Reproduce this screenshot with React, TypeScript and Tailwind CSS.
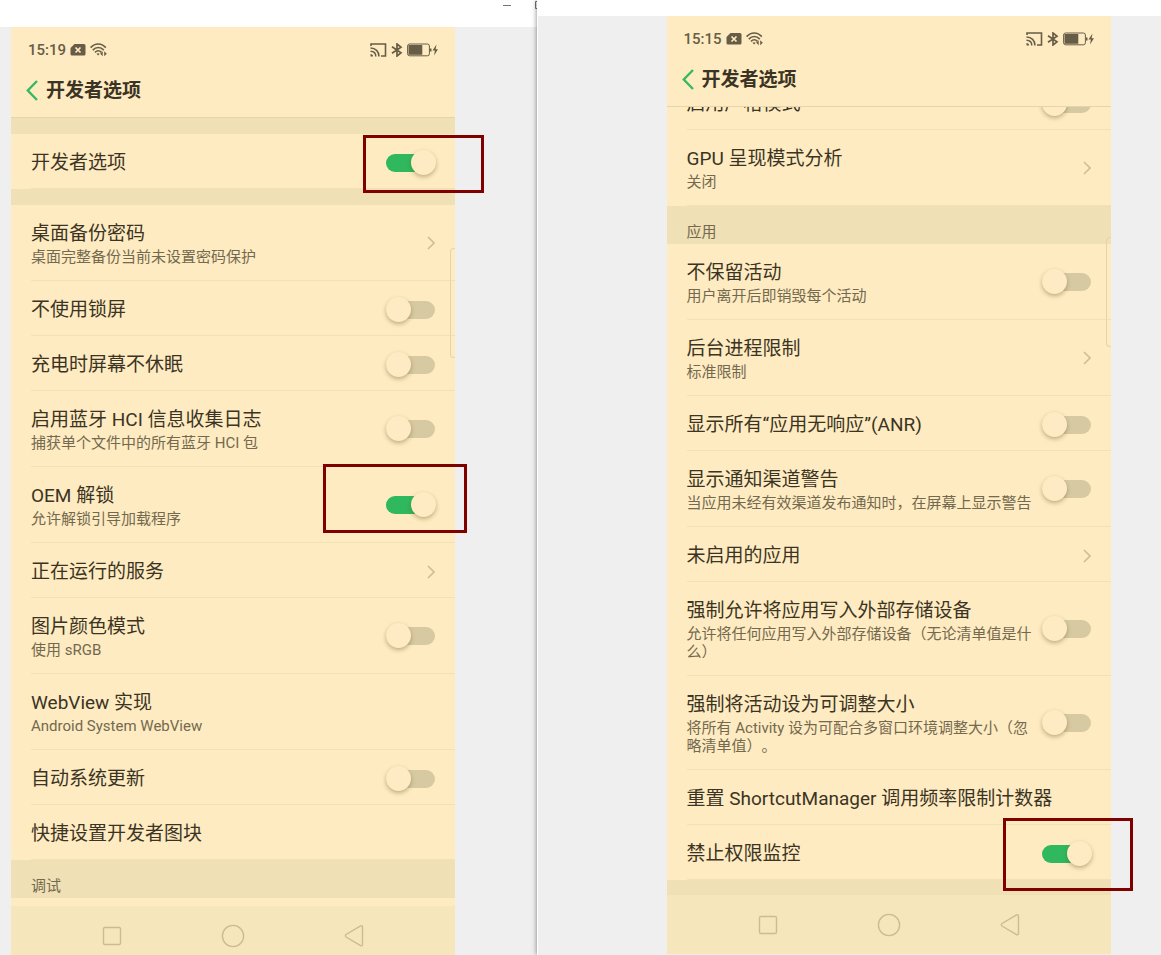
import { useState } from "react";
import type { ReactNode } from "react";

type RowType = {
  title: string;
  sub?: string;
  kind?: "switch" | "link";
  on?: boolean;
  // tailwind classes for the red frame around the switch
  mark?: string;
};

const systemRows: RowType[] = [
  {
    title: "桌面备份密码",
    sub: "桌面完整备份当前未设置密码保护",
    kind: "link",
  },
  { title: "不使用锁屏", kind: "switch" },
  { title: "充电时屏幕不休眠", kind: "switch" },
  {
    title: "启用蓝牙 HCI 信息收集日志",
    sub: "捕获单个文件中的所有蓝牙 HCI 包",
    kind: "switch",
  },
  {
    title: "OEM 解锁",
    sub: "允许解锁引导加载程序",
    kind: "switch",
    on: true,
    mark: "-top-[3px] -right-3 w-36 h-[69px]",
  },
  { title: "正在运行的服务", kind: "link" },
  { title: "图片颜色模式", sub: "使用 sRGB", kind: "switch" },
  { title: "WebView 实现", sub: "Android System WebView" },
  { title: "自动系统更新", kind: "switch" },
  { title: "快捷设置开发者图块" },
];

const appRows: RowType[] = [
  {
    title: "不保留活动",
    sub: "用户离开后即销毁每个活动",
    kind: "switch",
  },
  { title: "后台进程限制", sub: "标准限制", kind: "link" },
  { title: "显示所有“应用无响应”(ANR)", kind: "switch" },
  {
    title: "显示通知渠道警告",
    sub: "当应用未经有效渠道发布通知时，在屏幕上显示警告",
    kind: "switch",
  },
  { title: "未启用的应用", kind: "link" },
  {
    title: "强制允许将应用写入外部存储设备",
    sub: "允许将任何应用写入外部存储设备（无论清单值是什么）",
    kind: "switch",
  },
  {
    title: "强制将活动设为可调整大小",
    sub: "将所有 Activity 设为可配合多窗口环境调整大小（忽略清单值）。",
    kind: "switch",
  },
  { title: "重置 ShortcutManager 调用频率限制计数器" },
  {
    title: "禁止权限监控",
    kind: "switch",
    on: true,
    mark: "-top-[7px] -right-[22px] w-[130px] h-[73px]",
  },
];

const Row = ({ title, sub, kind, on = false, mark }: RowType) => {
  const [checked, setChecked] = useState(on);

  const text = (
    <span className="flex-1 min-w-0 flex flex-col">
      <span className="text-[19px] leading-7 text-[#3b3424] whitespace-nowrap">
        {title}
      </span>
      {sub && (
        <span className="text-[15px] leading-[18px] text-[#73694f]">{sub}</span>
      )}
    </span>
  );

  return (
    <li className="relative pl-5">
      {kind === "switch" ? (
        <label
          className={`flex items-center gap-2 pr-5 border-b border-[#f2e1b7] cursor-pointer ${
            sub ? "pt-[15px] pb-3.5" : "pt-[15px] pb-[11px]"
          }`}
        >
          {text}
          <input
            type="checkbox"
            role="switch"
            checked={checked}
            onChange={(e) => setChecked(e.target.checked)}
            className="relative shrink-0 appearance-none w-[49px] h-[18px] rounded-full cursor-pointer bg-[#d7c9a2] checked:bg-[#2fb85e] before:content-[''] before:absolute before:-top-1 before:left-0 before:size-[25px] before:rounded-full before:bg-[#feebc3] before:shadow-[0_2px_4px_rgba(100,80,30,0.4)] checked:before:left-[25px]"
          />
        </label>
      ) : (
        <button
          type="button"
          className={`w-full flex items-center gap-2 pr-5 text-left border-b border-[#f2e1b7] cursor-pointer ${
            sub ? "pt-[15px] pb-3.5" : "pt-[15px] pb-[11px]"
          }`}
        >
          {text}
          {kind === "link" && (
            <svg width="8" height="14" viewBox="0 0 8 14" fill="none">
              <path d="M1 1l6 6-6 6" stroke="#cdbe97" strokeWidth="1.6" />
            </svg>
          )}
        </button>
      )}
      {mark && (
        <span
          className={`absolute z-10 border-3 border-[#800000] pointer-events-none ${mark}`}
        />
      )}
    </li>
  );
};

const SectionTitle = ({ children }: { children: ReactNode }) => (
  <h2 className="bg-[#efe0b5] pl-5 pt-4 pb-0.5 text-[15px] leading-5 text-[#73694f]">
    {children}
  </h2>
);

const StatusBar = ({ time }: { time: string }) => (
  <div className="flex items-center h-5 pl-[17px] pr-4 text-[#675d46]">
    <span className="text-[15px] leading-5 font-medium">{time}</span>
    <svg className="ml-1" width="16" height="12" viewBox="0 0 16 12">
      <path
        d="M4.500 0H14a1.500 1.500 0 0 1 1.500 1.500v8.500a1.500 1.500 0 0 1-1.500 1.500H2A1.500 1.500 0 0 1 .5 10V4z"
        fill="currentColor"
      />
      <path
        d="M5.500 3.500l5 5M10.500 3.500l-5 5"
        stroke="#feebc1"
        strokeWidth="1.700"
      />
    </svg>
    <svg className="ml-1" width="18" height="14" viewBox="0 0 18 14" fill="none">
      <g stroke="currentColor" strokeWidth="1.600">
        <path d="M.6 4.600C5-.2 11.500-.2 15.800 4.600" />
        <path d="M2.800 7.100c3.300-3.500 7.700-3.500 11 0" />
        <path d="M5 9.400c2-2 4.500-2 6.500 0" />
      </g>
      <path d="M6.500 10.800c1-.9 2.300-.9 3.200 0L8.100 12.600z" fill="currentColor" />
      <path
        d="M12.700 8.200v5l-2.500-2.500zM14.200 8.200v5l2.600-2.500z"
        fill="currentColor"
      />
    </svg>
    <span className="flex-1" />
    <svg width="17" height="14" viewBox="0 0 17 14" fill="none">
      <path
        d="M1 3V1h14.500v12H11"
        stroke="currentColor"
        strokeWidth="1.600"
      />
      <g stroke="currentColor" strokeWidth="1.500">
        <path d="M.5 5c5 0 8.500 3.500 8.500 8.500M.5 8.200c3.200 0 5.300 2.100 5.300 5.300" />
      </g>
      <path d="M.5 11a2.600 2.600 0 0 1 2.600 2.600H.5z" fill="currentColor" />
    </svg>
    <svg
      className="ml-1"
      width="12"
      height="14"
      viewBox="0 0 12 14"
      fill="none"
      stroke="currentColor"
      strokeWidth="1.700"
    >
      <path d="M1 3.800l9 6L6 13V1l4 3.200-9 6" />
    </svg>
    <svg className="ml-1" width="32" height="14" viewBox="0 0 32 14">
      <rect
        x="0.600"
        y="1"
        width="21.800"
        height="11.800"
        rx="2"
        fill="none"
        stroke="currentColor"
      />
      <rect x="1.500" y="2" width="13.800" height="9.800" fill="currentColor" />
      <rect x="23" y="5.500" width="1.500" height="3" fill="currentColor" />
      <path d="M29.500 1.500l-4 6h2.400l-.9 5 4-6.300h-2.400z" fill="currentColor" />
    </svg>
  </div>
);

const NavBar = () => (
  <nav className="flex justify-center items-center gap-[97px] h-[59px] bg-[#f6e6bb]">
    <button type="button" aria-label="最近任务" className="cursor-pointer">
      <svg width="24" height="24" fill="none" stroke="#cbbc95" strokeWidth="1.400">
        <rect x="3.500" y="3.500" width="17" height="17" rx="1.500" />
      </svg>
    </button>
    <button type="button" aria-label="主屏幕" className="cursor-pointer">
      <svg width="24" height="24" fill="none" stroke="#cbbc95" strokeWidth="1.400">
        <circle cx="12" cy="12" r="10.600" />
      </svg>
    </button>
    <button type="button" aria-label="返回" className="cursor-pointer">
      <svg width="24" height="24" fill="none" stroke="#cbbc95" strokeWidth="1.400">
        <path d="M18.600 1.900a1.200 1.200 0 0 1 1.900 1.100v17.500a1.200 1.200 0 0 1-1.900 1.100L4 13a1.500 1.500 0 0 1 0-2.500z" />
      </svg>
    </button>
  </nav>
);

const Phone = ({ time, children }: { time: string; children: ReactNode }) => (
  <div className="relative bg-[#feebc1]">
    <header className="pt-[13px] pb-3 border-b border-[#e6d5aa]">
      <StatusBar time={time} />
      <div className="flex items-center gap-2 mt-[17px] pl-[15px]">
        <button type="button" aria-label="后退" className="cursor-pointer">
          <svg width="12" height="22" viewBox="0 0 12 22" fill="none">
            <path d="M11 1L1.800 10.500l9.200 9.500" stroke="#35b962" strokeWidth="2.400" />
          </svg>
        </button>
        <h1 className="text-[19px] leading-7 font-bold text-[#3b3424]">
          开发者选项
        </h1>
      </div>
    </header>
    {children}
    <NavBar />
    {/* edge panel handle */}
    <span className="absolute right-0 top-[221px] w-[5px] h-[110px] rounded-l border border-r-0 border-[#e3d4aa]" />
  </div>
);

const App = () => {
  return (
    <div
      className="flex h-screen overflow-hidden bg-[#efefef] [text-spacing-trim:space-all]"
      style={{ fontFamily: 'Roboto, "Noto Sans CJK SC", sans-serif' }}
    >
      <section className="flex-[537] min-w-0">
        <div className="h-[27px] bg-white flex justify-end overflow-hidden">
          <svg className="shrink-0" width="40" height="12" fill="none" stroke="#73737d">
            <path d="M6 5.500h8M38.500 1.500h8v7h-8z" />
          </svg>
        </div>
        <div className="pl-[11px] pr-[82px]">
          <Phone time="15:19">
            <div className="h-4 bg-[#efe0b5]" />
            <ul>
              <Row
                title="开发者选项"
                kind="switch"
                on
                mark="top-px -right-[29px] w-[121px] h-[58px]"
              />
            </ul>
            <div className="h-4 bg-[#efe0b5]" />
            <ul>
              {systemRows.map((row) => (
                <Row key={row.title} {...row} />
              ))}
            </ul>
            <SectionTitle>调试</SectionTitle>
            <div className="h-2" />
          </Phone>
        </div>
      </section>

      <section className="relative flex-[624] min-w-0 bg-[#efefef] border-l border-white shadow-[0_0_5px_rgba(0,0,0,0.5)]">
        <div className="h-4 bg-white" />
        <div className="pl-[129px] pr-[50px]">
          <Phone time="15:15">
            {/* list is scrolled, only the bottom of this row shows */}
            <ul className="h-[23px] overflow-hidden flex flex-col justify-end">
              <Row title="启用严格模式" kind="switch" />
            </ul>
            <ul>
              <Row title="GPU 呈现模式分析" sub="关闭" kind="link" />
            </ul>
            <SectionTitle>应用</SectionTitle>
            <ul>
              {appRows.map((row) => (
                <Row key={row.title} {...row} />
              ))}
            </ul>
            <div className="h-[15px] bg-[#efe0b5]" />
          </Phone>
        </div>
      </section>
    </div>
  );
};

export default App;
